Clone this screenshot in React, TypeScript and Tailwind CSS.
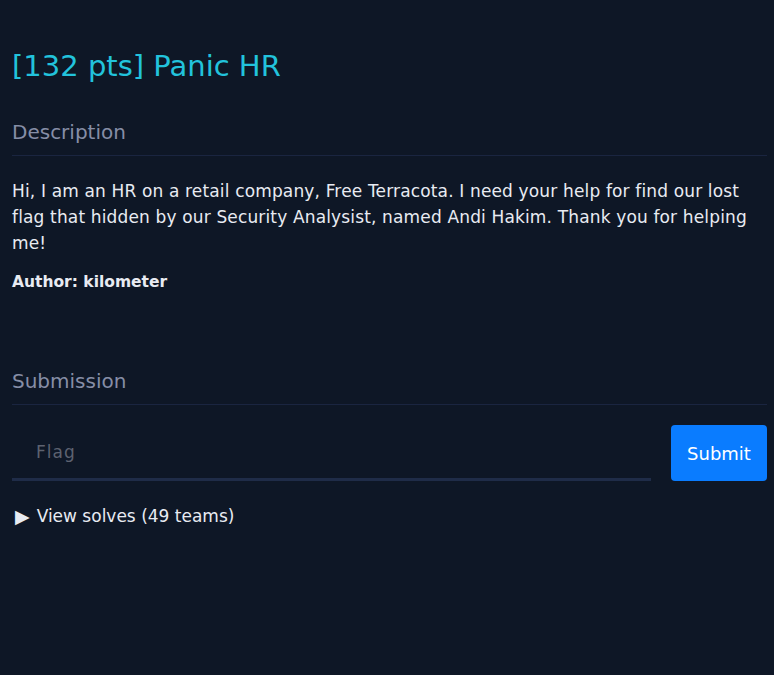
export default function App() {
  return (
    <div className="min-h-[675px] w-full bg-[#0e1726] pl-3 pr-[7px] pt-[44px] font-['DejaVu_Sans','Noto_Sans',sans-serif] text-[#e6e9f0]">
      <h1 className="text-[29px] leading-[44px] text-[#22c3dc]">[132 pts] Panic HR</h1>

      <div className="mt-[29px]">
        <h2 className="pb-[8px] text-[20px] leading-[30px] text-[#868ea6]">Description</h2>
        <div className="h-px bg-[#1a2540]" />
      </div>

      <p className="mt-[22px] text-[17px] leading-[26px] tracking-[0.15px] text-[#e8ebf2]">
        Hi, I am an HR on a retail company, Free Terracota. I need your help for find our lost flag that hidden by our Security Analysist, named Andi Hakim. Thank you for helping me!
      </p>
      <p className="mt-[13px] text-[15.5px] leading-[26px] font-bold text-[#e8ebf2]">Author: kilometer</p>

      <div className="mt-[71px]">
        <h2 className="pb-[8px] text-[20px] leading-[30px] text-[#868ea6]">Submission</h2>
        <div className="h-px bg-[#1a2540]" />
      </div>

      <div className="mt-[20px] flex items-start gap-5">
        <input
          placeholder="Flag"
          className="h-[56px] flex-1 border-b-[3px] border-[#1f2c48] bg-transparent px-6 text-[17px] tracking-[1px] text-[#e8ebf2] outline-none placeholder:text-[#5d6270]"
        />
        <button className="h-[56px] w-[96px] rounded-[4px] bg-[#0a7cff] text-[18px] text-white">Submit</button>
      </div>

      <div className="mt-[22px] flex items-center gap-[7px] pl-[3px] text-[17px] leading-[26px] text-[#e8ebf2]">
        <span className="text-[19px] leading-[26px]">▶</span>
        <span>View solves (49 teams)</span>
      </div>
    </div>
  );
}
